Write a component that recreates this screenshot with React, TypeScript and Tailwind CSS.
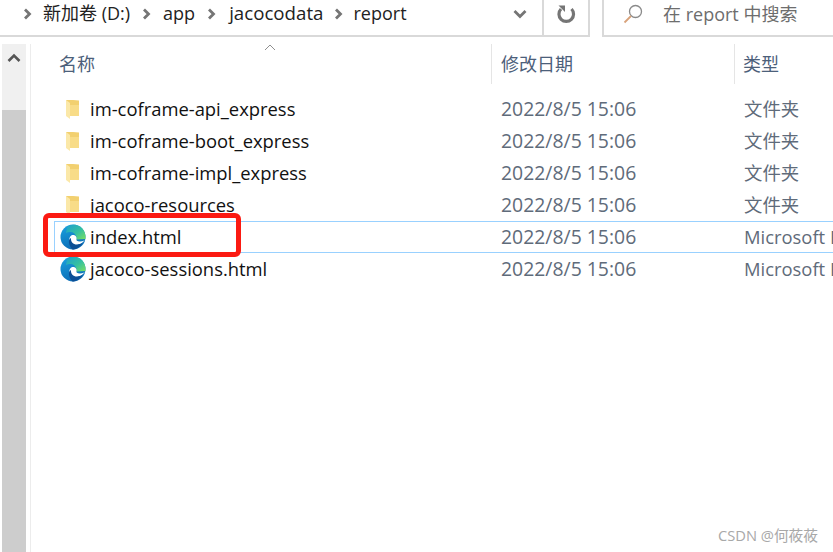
import React from "react";

const Chevron = () => (
  <svg width="9" height="12" viewBox="0 0 9 12" className="shrink-0">
    <path d="M2 1.500 L6.500 6 L2 10.500" fill="none" stroke="#757575" strokeWidth="2.800" />
  </svg>
);

const Folder = () => (
  <svg width="15" height="21" viewBox="0 0 15 21" className="shrink-0">
    <path d="M1 1 H8 L14 1.500 V17 H4 Z" fill="#f2d070" />
    <path d="M1 1 L5 4 V20 L1 17 Z" fill="#fbe8a8" />
    <path d="M5 6 H14 V17 H5 Z" fill="#f8dc88" />
  </svg>
);

const Edge = () => (
  <svg width="26" height="26" viewBox="0 0 26 26" className="shrink-0">
    <defs>
      <linearGradient id="eb" x1="0" y1="0" x2="0.3" y2="1">
        <stop offset="0" stopColor="#1aa3e0" />
        <stop offset="1" stopColor="#0d6fb8" />
      </linearGradient>
      <linearGradient id="eg" x1="0" y1="0" x2="1" y2="1">
        <stop offset="0" stopColor="#1e9fd0" />
        <stop offset="0.55" stopColor="#35c1a0" />
        <stop offset="1" stopColor="#7be060" />
      </linearGradient>
    </defs>
    <circle cx="13" cy="13" r="12.500" fill="url(#eb)" />
    <path d="M7 3 C10 0.500 16 0 20 2.500 C24 5 26 10 25.500 15 L16.500 15.500 C17 11.500 14.500 8.500 11 8 C9 7.700 7.500 8 6 9 Z" fill="url(#eg)" />
    <path d="M25.500 15 C25 16.500 23 17.500 20 17.500 C17 17.500 16 16.500 16.500 15 C17 12.500 15 11 13 11 C10.500 11 9 13.500 9.500 16.500 C10 19 12 21 15 21 C18 21 23 19.500 25.500 15 Z" fill="#ffffff" />
    <path d="M11 14 C10.500 18 13.500 20.800 17.500 20.500 C19.500 20.300 21 19.700 22.800 18.700 C20.500 23 16 25.500 12.500 25.500 C10.500 23.500 8.500 20 9 16.500 C9.300 15.500 10 14.500 11 14 Z" fill="#0b4f96" />
  </svg>
);

const rows: { name: string; icon: "folder" | "edge"; type: string; selected?: boolean }[] = [
  { name: "im-coframe-api_express", icon: "folder", type: "文件夹" },
  { name: "im-coframe-boot_express", icon: "folder", type: "文件夹" },
  { name: "im-coframe-impl_express", icon: "folder", type: "文件夹" },
  { name: "jacoco-resources", icon: "folder", type: "文件夹" },
  { name: "index.html", icon: "edge", type: "Microsoft Edge HTML Document", selected: true },
  { name: "jacoco-sessions.html", icon: "edge", type: "Microsoft Edge HTML Document" },
];

const font = { fontFamily: '"Open Sans", "Noto Sans CJK SC", sans-serif' };

export default function App() {
  return (
    <div className="relative w-[833px] h-[552px] overflow-hidden bg-white text-[18px] text-[#1a1a1a]" style={font}>
      {/* Address bar */}
      <div className="flex h-[37px] items-stretch">
        <div className="flex w-[590px] shrink-0 items-stretch border-b-2 border-r-2 border-[#d9d9d9] pl-[23px]">
          <div className="flex flex-1 items-center pb-[8px]">
            <Chevron />
            <span className="ml-[11px] text-[#222222]">新加卷 (D:)</span>
            <span className="ml-[12px]"><Chevron /></span>
            <span className="ml-[12px] text-[#222222]">app</span>
            <span className="ml-[12px]"><Chevron /></span>
            <span className="ml-[13px] text-[18.700px] text-[#222222]">jacocodata</span>
            <span className="ml-[11px]"><Chevron /></span>
            <span className="ml-[10px] text-[#222222]">report</span>
          </div>
          <div className="flex items-center pb-[8px]">
            <svg width="14" height="10" viewBox="0 0 14 10" className="mr-[15px]">
              <path d="M1.500 2 L7 7.500 L12.500 2" fill="none" stroke="#757575" strokeWidth="2.800" />
            </svg>
          </div>
          <div className="flex w-[46px] items-center justify-center border-l-2 border-[#d9d9d9] pb-[8px]">
            <svg width="20" height="20" viewBox="0 0 20 20">
              <path d="M5 5 A7.300 7.300 0 1 0 15.500 5" fill="none" stroke="#757575" strokeWidth="3.200" />
              <path d="M2.500 1.500 H9 V8 Z" fill="#757575" />
            </svg>
          </div>
        </div>
        <div className="ml-[12px] flex flex-1 items-center border-b-2 border-l-2 border-[#d9d9d9] pb-[7px] pl-[19px] text-[#6d6d6d]">
          <svg width="20" height="20" viewBox="0 0 20 20" className="shrink-0">
            <circle cx="12.500" cy="7.500" r="6" fill="none" stroke="#8a8a8a" strokeWidth="1.300" />
            <path d="M8 12 L1.500 18.500" stroke="#d8a27a" strokeWidth="1.800" />
          </svg>
          <span className="ml-[20px]">在 report 中搜索</span>
        </div>
      </div>

      <div className="flex h-[515px]">
        {/* Scrollbar */}
        <div className="ml-[2px] mt-[7px] flex h-[508px] w-[24px] shrink-0 flex-col bg-[#f0f0f0]">
          <div className="flex h-[66px] shrink-0 items-start justify-center pt-[9px]">
            <svg width="14" height="10" viewBox="0 0 14 10">
              <path d="M1.500 8 L7 2.500 L12.500 8" fill="none" stroke="#555555" strokeWidth="2.600" />
            </svg>
          </div>
          <div className="flex-1 bg-[#cdcdcd]" />
        </div>
        <div className="ml-[4px] mt-[7px] w-[1px] shrink-0 bg-[#ececec]" />

        {/* List */}
        <div className="relative min-w-0 flex-1 pt-[7px]">
          <svg width="12" height="7" viewBox="0 0 12 7" className="absolute left-[233px] top-[7px]">
            <path d="M1 6 L6 1 L11 6" fill="none" stroke="#8f8f8f" strokeWidth="1" />
          </svg>
          <div className="flex h-[40px] items-center text-[#4c607a]">
            <div className="w-[460px] pl-[28px] pt-[1px]">名称</div>
            <div className="h-full w-[1px] bg-[#e5e5e5]" />
            <div className="w-[242px] pl-[9px] pt-[1px]">修改日期</div>
            <div className="h-full w-[1px] bg-[#e5e5e5]" />
            <div className="pl-[8px] pt-[1px]">类型</div>
          </div>
          <div className="mt-[9px] pl-[23px]">
            {rows.map((r) => (
              <div
                key={r.name}
                className={
                  "flex h-[32px] items-center overflow-hidden whitespace-nowrap border-y border-l " +
                  (r.selected ? "border-[#99d1ff]" : "border-transparent")
                }
              >
                <div className="flex w-[35px] shrink-0 justify-center">
                  {r.icon === "folder" ? <Folder /> : <Edge />}
                </div>
                <div className="w-[411px] shrink-0 text-[18.400px] text-[#111111]">{r.name}</div>
                <div className="w-[243px] shrink-0 text-[19.400px] text-[#5f6b7a]">2022/8/5 15:06</div>
                <div className="text-[18.400px] text-[#5f6b7a]">{r.type}</div>
              </div>
            ))}
          </div>
        </div>
      </div>

      {/* Annotation drawn over the list */}
      <div className="absolute left-[43px] top-[213px] h-[44px] w-[198px] rounded-[6px] border-[5px] border-[#fb1a12]" />
      <div className="absolute right-[15px] top-[525px] text-[14.700px] leading-[20px] text-[#a8a8a8]">CSDN @何莜莜</div>
    </div>
  );
}
